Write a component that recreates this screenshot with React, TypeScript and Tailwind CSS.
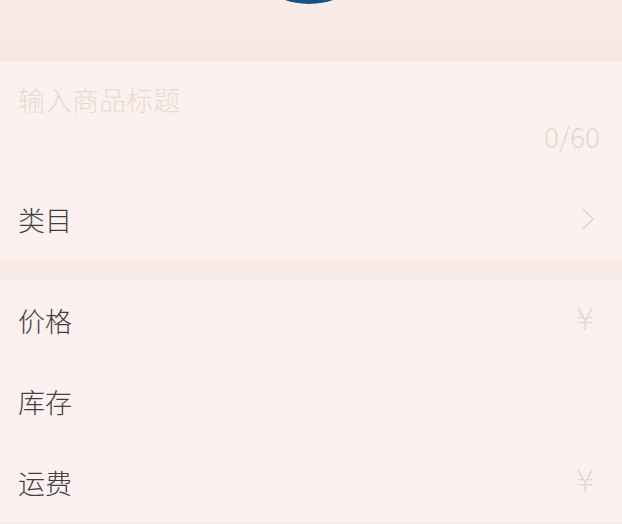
import { ReactNode } from "react";

const font = { fontFamily: '"Noto Sans CJK SC", "Noto Sans", sans-serif' };

function Row({ label, right }: { label: string; right?: ReactNode }) {
    return (
        <div className="h-[80px] flex items-center justify-between pl-[18px] pr-[28px]">
            <span className="text-[27px] leading-none font-light text-[#3e4142]">{label}</span>
            {right}
        </div>
    );
}

function Divider() {
    return <div className="h-px ml-[17px] bg-[#faebe9]" />;
}

function Yen() {
    return (
        <span className="text-[31px] leading-none font-light text-[#e3dac8] mr-[-1px] -mt-[2px]" style={{ fontFamily: '"DejaVu Sans", sans-serif' }}>
            ¥
        </span>
    );
}

function Chevron() {
    return (
        <svg width="14" height="22" viewBox="0 0 14 22" className="mr-[-1px]">
            <polyline points="2,1 12,11 2,21" fill="none" stroke="#e2d8c6" strokeWidth="1.6" />
        </svg>
    );
}

export default function App() {
    return (
        <div className="w-[622px] h-[524px] overflow-hidden bg-[#f9ebe6]" style={font}>
            {/* Header strip with avatar */}
            <header className="h-[61px] overflow-hidden bg-gradient-to-b from-[#f9ece7] from-40% to-[#f5e6dd]">
                <div className="w-[148px] h-[148px] mx-auto mt-[-144px] rounded-full bg-[#1b4f87] translate-x-[-2px]" />
            </header>

            {/* Title + category */}
            <section className="bg-[#fdf0f0]">
                <div className="h-[117px] pl-[18px] pr-[22px] pt-[21px]">
                    <div className="text-[27px] leading-[36px] font-light text-[#e8ddcd]">输入商品标题</div>
                    <div className="text-right text-[28px] leading-[36px] font-light text-[#e4d9c9]">0/60</div>
                </div>
                <Divider />
                <Row label="类目" right={<Chevron />} />
            </section>

            <div className="h-[21px]" />

            {/* Price / stock / shipping */}
            <section className="bg-[#fdf0f0]">
                <Row label="价格" right={<Yen />} />
                <Divider />
                <Row label="库存" />
                <Divider />
                <Row label="运费" right={<Yen />} />
            </section>
        </div>
    );
}
